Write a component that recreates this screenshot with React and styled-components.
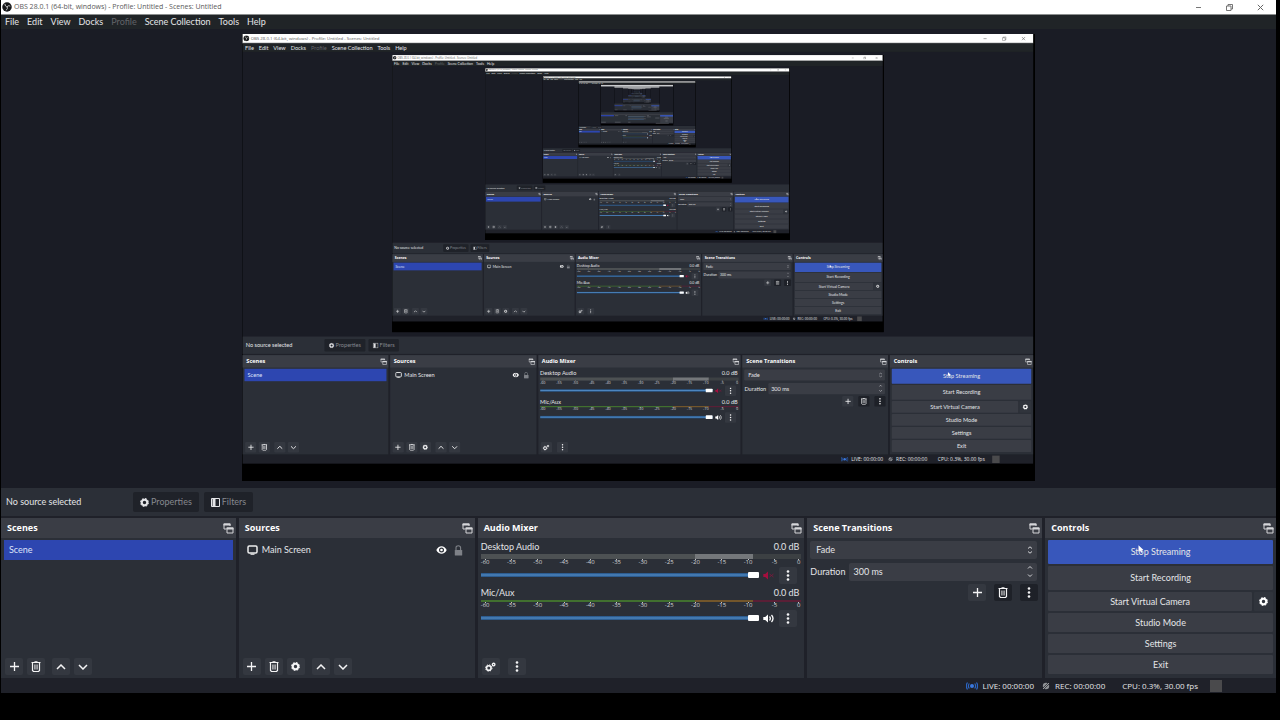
import React, { useId } from 'react';
import styled, { createGlobalStyle, css } from 'styled-components';

const SCALE = 0.62;
const DEPTH = 5;
const THUMBS = 5;
const MARKS = [-60, -55, -50, -45, -40, -35, -30, -25, -20, -15, -10, -5, 0];

const GlobalStyle = createGlobalStyle`
    * {
        box-sizing: border-box;
    }

    body {
        margin: 0;
        background: #000;
        overflow: hidden;
    }

    button, input, select {
        font: inherit;
        color: inherit;
        border: 0;
        margin: 0;
        padding: 0;
        background: none;
    }
`

const Screen = styled.div`
    width: 100vw;
    height: 100vh;
    padding: 0 4px 27px 1px;
    background: #000;
    color: #e4e5e8;
    font-family: Lato, 'Open Sans', sans-serif;
    font-size: 9px;
    line-height: 12px;
    white-space: nowrap;
`

const Window = styled.div`
    height: 100%;
    display: flex;
    flex-direction: column;
    background: #1f2129;
`

const TitleBar = styled.header`
    height: 15px;
    flex: none;
    display: flex;
    align-items: center;
    gap: 2px;
    padding: 0 1px;
    background: #fff;
    color: #5a5a5a;
    font-family: 'Open Sans', 'Noto Sans', sans-serif;
    font-size: 7px;
    border-bottom: 1px solid #8b8e8e;
`

const Title = styled.span`
    flex: 1;
`

const WindowButton = styled.button`
    width: 29px;
    height: 14px;
    display: grid;
    place-items: center;
`

const MenuBar = styled.nav`
    flex: none;
    height: 14px;
    display: flex;
    align-items: center;
    gap: 8px;
    padding: 0 4px;
    background: #202427;
`

const MenuItem = styled.button`
    line-height: 12px;
    color: ${props => (props.disabled ? '#606367' : '#e4e5e8')};
`

const Preview = styled.main`
    flex: 1;
    min-height: 0;
    display: flex;
    align-items: center;
    justify-content: center;
    padding-bottom: 2px;
    background: #1a1c25;
`

const Capture = styled.div`
    width: calc(100vw * ${SCALE});
    height: calc(100vh * ${SCALE});
    overflow: hidden;
    background: #000;
`

const Mirror = styled.div`
    width: 100vw;
    height: 100vh;
    transform: scale(${SCALE});
    transform-origin: 0 0;
`

const Thumbnail = styled.svg`
    display: block;
    width: 100%;
    height: 100%;
`

const ContextBar = styled.div`
    flex: none;
    height: 28px;
    display: flex;
    align-items: center;
    gap: 5px;
    padding-left: 5px;
    background: #2b2f37;
`

const ContextLabel = styled.span`
    width: 122px;
`

const ContextButton = styled.button`
    height: 20px;
    display: flex;
    align-items: center;
    gap: 2px;
    padding: 0 7px;
    border-radius: 2px;
    background: #1f2229;
    color: #85888e;

    svg {
        color: #e4e5e8;
    }
`

const Docks = styled.div`
    flex: none;
    height: 160px;
    margin-top: 2px;
    display: grid;
    grid-template-columns: 235fr 236fr 327fr 235fr 231fr;
    gap: 3px;
`

const DockPanel = styled.section`
    min-width: 0;
    display: flex;
    flex-direction: column;
    background: #2b2f37;
`

const DockHeader = styled.div`
    flex: none;
    height: 20px;
    display: flex;
    align-items: center;
    justify-content: space-between;
    padding: 0 2px 0 6px;
    background: #3a3d45;
`

const DockTitle = styled.h2`
    margin: 0;
    font-family: 'Open Sans', 'Noto Sans', sans-serif;
    font-size: 9px;
    line-height: 12px;
    font-weight: 700;
    color: #fff;
`

const DockBody = styled.div`
    flex: 1;
    display: flex;
    flex-direction: column;
    padding: 2px 3px 3px;
`

const List = styled.ul`
    flex: 1;
    margin: 0;
    padding: 0;
    list-style: none;
`

const SceneRow = styled.button`
    width: 100%;
    height: 20px;
    padding-left: 5px;
    text-align: left;
    background: #2d46b0;
    color: #dfe4fa;
`

const SourceRow = styled.li`
    height: 20px;
    display: flex;
    align-items: center;
    gap: 4px;
    padding: 0 7px 0 5px;
`

const SourceName = styled.span`
    flex: 1;
`

const ToggleButton = styled.button`
    width: 13px;
    height: 16px;
    display: grid;
    place-items: center;
    color: ${props => (props.$dim ? '#7e8187' : '#fff')};
`

const Toolbar = styled.div`
    display: flex;
    gap: ${props => (props.$wide ? '8px' : '4px')};
    justify-content: ${props => (props.$end ? 'flex-end' : 'flex-start')};
    padding: 0 1px;
`

const ToolButton = styled.button`
    width: 18px;
    height: 17px;
    flex: none;
    display: grid;
    place-items: center;
    border-radius: 2px;
    background: ${props => (props.$dark ? '#1e2128' : '#343840')};
    color: #f4f4f5;
    ${props => props.$gap && css`
        margin-left: 3px;
    `}
`

const Channels = styled.div`
    flex: 1;
    display: flex;
    flex-direction: column;
    gap: 3px;
`

const Channel = styled.div`
    display: flex;
    flex-direction: column;
`

const ChannelHead = styled.div`
    height: 14px;
    line-height: 14px;
    display: flex;
    justify-content: space-between;
    padding-right: 2px;
`

const Meter = styled.div`
    height: ${props => (props.$muted ? '5px' : '2px')};
    display: grid;
    grid-template-columns: 214fr 58fr 48fr;
`

const MeterZone = styled.span`
    background: ${props => props.$color};
`

const Scale = styled.div`
    display: flex;
    justify-content: space-between;
    height: 8px;
    color: #d2d4d8;
    font-family: 'Open Sans', 'Noto Sans', sans-serif;
    font-size: 6px;
    line-height: 5px;
`

const Mark = styled.span`
    width: 9px;
    display: flex;
    flex-direction: column;
    align-items: center;

    &::before {
        content: '';
        width: 1px;
        height: 1px;
        flex: none;
        background: #c2c4c8;
    }

    &:last-child {
        width: 5px;
    }
`

const VolumeRow = styled.div`
    height: 16px;
    display: flex;
    align-items: center;
    gap: 3px;
    padding-right: 4px;
`

const Volume = styled.input`
    appearance: none;
    flex: 1;
    min-width: 0;
    height: 6px;
    background: linear-gradient(#234f80, #4d86bf 50%, #234f80) center / 100% 4px no-repeat;

    &::-webkit-slider-thumb {
        appearance: none;
        width: 11px;
        height: 6px;
        border-radius: 1px;
        background: #fff;
    }
`

const MuteButton = styled.button`
    width: 12px;
    height: 12px;
    margin-right: 2px;
    display: grid;
    place-items: center;
    color: ${props => (props.$muted ? '#a30f3e' : '#fff')};
`

const Field = styled.div`
    height: 19px;
    display: flex;
    align-items: center;
    gap: 4px;
    margin-bottom: 3px;
`

const InputBox = styled.div`
    flex: 1;
    min-width: 0;
    height: 18px;
    display: flex;
    align-items: center;
    padding: 0 4px;
    margin-right: 2px;
    border-radius: 2px;
    background: #3a3d45;
`

const Select = styled.select`
    appearance: none;
    flex: 1;
    padding-left: 2px;
`

const TextInput = styled.input`
    flex: 1;
    min-width: 0;
`

const ControlButtons = styled.div`
    display: flex;
    flex-direction: column;
    gap: 2px;
`

const ControlRow = styled.div`
    display: flex;
    gap: 2px;
`

const ControlButton = styled.button`
    position: relative;
    flex: 1;
    height: ${props => (props.$tall ? '24px' : '19px')};
    border-radius: 1px;
    background: ${props => (props.$active ? '#3857bb' : '#3a3d45')};
`

const GearButton = styled(ControlButton)`
    flex: 0 0 19px;
    display: grid;
    place-items: center;
    background: #30343c;
    color: #fff;
`

const Pointer = styled.svg`
    position: absolute;
    left: calc(50% - 23px);
    top: 5px;
`

const StatusBar = styled.footer`
    flex: none;
    height: 15px;
    display: flex;
    align-items: center;
    justify-content: flex-end;
    gap: 5px;
    padding-right: 54px;
    font-family: 'Open Sans', 'Noto Sans', sans-serif;
    font-size: 8px;
`

const StatusText = styled.span`
    margin-right: ${props => props.$space || 0}px;
`

const StatusBox = styled.span`
    width: 12px;
    height: 12px;
    background: #4a4a4c;
`

const ObsLogo = () => (
    <svg width="10" height="10" viewBox="0 0 20 20">
        <circle cx="10" cy="10" r="9.5" fill="#17181a" />
        <g fill="none" stroke="#d6d6d6" strokeWidth="1.8" strokeLinecap="round">
            <path d="M6 4.5c0 3 1.600 4.800 4.300 5.200" />
            <path d="M15.800 8c-2.600-1.300-4.500-.6-5.500 1.700" />
            <path d="M8.500 16c2.600-1.400 3-3.500 1.800-6.300" />
        </g>
    </svg>
)

const MinimizeIcon = () => (
    <svg width="7" height="7" viewBox="0 0 7 7" stroke="#777" fill="none"><path d="M1 3.500h5" /></svg>
)

const RestoreIcon = () => (
    <svg width="7" height="7" viewBox="0 0 7 7" stroke="#666" fill="none" strokeWidth=".9">
        <path d="M.5 2h4.500v4.500H.5zM2 2V.5h4.500V5H5" />
    </svg>
)

const CloseIcon = () => (
    <svg width="7" height="7" viewBox="0 0 7 7" stroke="#666" fill="none"><path d="M.8.8l5.400 5.400M6.200.8L.8 6.200" /></svg>
)

const FloatIcon = () => (
    <svg width="11" height="11" viewBox="0 0 11 11" fill="none" stroke="#d5d6d9">
        <path d="M3 6H1V1h6v2" />
        <path d="M.5 1.500h7M3.500 5.500h7" strokeWidth="1.800" />
        <path d="M4 5h6v5H4z" />
    </svg>
)

const PlusIcon = () => (
    <svg width="9" height="9" viewBox="0 0 9 9" stroke="currentColor" strokeWidth="1.300"><path d="M4.500 0v9M0 4.500h9" /></svg>
)

const TrashIcon = () => (
    <svg width="10" height="11" viewBox="0 0 10 11" fill="none" stroke="currentColor">
        <path d="M.5 1.500h9M3.500.8h3M1.500 1.500v8l1 1h5l1-1v-8" strokeWidth="1.200" />
        <path d="M3.700 3.500v5M5 3.500v5M6.300 3.500v5" strokeWidth=".7" />
    </svg>
)

const GearIcon = () => (
    <svg width="9" height="9" viewBox="0 0 10 10" fill="none" stroke="currentColor">
        <circle cx="5" cy="5" r="3" strokeWidth="2.200" />
        <circle cx="5" cy="5" r="4.300" strokeWidth="1.200" strokeDasharray="1.900 1.477" />
    </svg>
)

const GearsIcon = () => (
    <svg width="11" height="10" viewBox="0 0 11 10" fill="none" stroke="currentColor">
        <circle cx="3.800" cy="6" r="2.300" strokeWidth="1.600" />
        <circle cx="3.800" cy="6" r="3.200" strokeDasharray="1.300 1.210" />
        <circle cx="8.600" cy="2.600" r="1.300" strokeWidth="1.400" />
    </svg>
)

const UpIcon = () => (
    <svg width="10" height="6" viewBox="0 0 10 6" fill="none" stroke="currentColor" strokeWidth="1.500"><path d="M1 5l4-4 4 4" /></svg>
)

const DownIcon = () => (
    <svg width="10" height="6" viewBox="0 0 10 6" fill="none" stroke="currentColor" strokeWidth="1.500"><path d="M1 1l4 4 4-4" /></svg>
)

const DotsIcon = () => (
    <svg width="4" height="11" viewBox="0 0 4 11" fill="currentColor">
        <circle cx="2" cy="1.500" r="1.300" />
        <circle cx="2" cy="5.500" r="1.300" />
        <circle cx="2" cy="9.500" r="1.300" />
    </svg>
)

const FiltersIcon = () => (
    <svg width="9" height="9" viewBox="0 0 9 9" fill="none" stroke="currentColor">
        <path d="M.5.5h8v8h-8z" />
        <path d="M1.500 1h3v7h-3z" fill="currentColor" stroke="none" />
    </svg>
)

const ScreenIcon = () => (
    <svg width="11" height="10" viewBox="0 0 11 10" fill="none" stroke="#eceded" strokeWidth="1.500">
        <rect x="1" y="1" width="9" height="7" rx="1.200" />
        <path d="M3.500 9.200h4" strokeWidth="1.200" />
    </svg>
)

const EyeIcon = () => (
    <svg width="11" height="8" viewBox="0 0 11 8">
        <path d="M.3 4C1.500 1.500 3.300.2 5.500.2S9.500 1.500 10.700 4C9.500 6.500 7.700 7.800 5.500 7.800S1.500 6.500.3 4z" fill="currentColor" />
        <circle cx="5.500" cy="4" r="2.500" fill="#2b2f37" />
        <circle cx="5.500" cy="4" r="1.300" fill="currentColor" />
    </svg>
)

const LockIcon = () => (
    <svg width="9" height="11" viewBox="0 0 9 11">
        <path d="M2 5V2.800C2 1.400 3 .7 4.300.7s2.300.8 2.300 2.100V5" fill="none" stroke="currentColor" strokeWidth="1.100" />
        <rect x=".8" y="5" width="7.400" height="5.500" rx=".6" fill="currentColor" />
    </svg>
)

const SpeakerIcon = () => (
    <svg width="11" height="9" viewBox="0 0 11 9" fill="none" stroke="currentColor">
        <path d="M.3 3h1.900L5 .5v8L2.200 6H.3z" fill="currentColor" stroke="none" />
        <path d="M6.500 2.500c1 1.200 1 2.800 0 4M8.500 1c1.900 2.200 1.900 4.800 0 7" strokeWidth="1.300" />
    </svg>
)

const MutedIcon = () => (
    <svg width="11" height="9" viewBox="0 0 11 9" fill="currentColor">
        <path d="M.3 3h1.900L5 .5v8L2.200 6H.3z" />
        <path d="M6.500 3l4 3M10.500 3l-4 3" stroke="currentColor" opacity=".6" />
    </svg>
)

const SpinIcon = ({ tall }) => (
    <svg width="6" height={tall ? 13 : 8} viewBox={tall ? '0 0 6 13' : '0 0 6 8'} fill="none" stroke="#d5d6d9">
        <path d={tall ? 'M1 3.500l2-2 2 2M1 9.500l2 2 2-2' : 'M1 2.500l2-1.700 2 1.700M1 5.500l2 1.700 2-1.700'} />
    </svg>
)

const LiveIcon = () => (
    <svg width="12" height="8" viewBox="0 0 12 8" fill="none" stroke="#2c66c4" strokeWidth="1.200">
        <circle cx="6" cy="4" r="2" fill="#3a78de" stroke="none" />
        <path d="M3.300 1.500c-1.100 1.500-1.100 3.500 0 5M1.500.5c-1.300 2-1.300 5 0 7M8.700 1.500c1.100 1.500 1.100 3.500 0 5M10.500.5c1.300 2 1.300 5 0 7" />
    </svg>
)

const RecIcon = () => (
    <svg width="8" height="8" viewBox="0 0 8 8">
        <circle cx="4" cy="4" r="3.200" fill="#8e9094" />
        <path d="M.8 7.200l6.400-6.400" stroke="#1f2129" strokeWidth="1.800" />
        <path d="M1 7l6-6" stroke="#b9babd" strokeWidth=".8" />
    </svg>
)

const Dock = ({ title, children }) => (
    <DockPanel>
        <DockHeader>
            <DockTitle>{title}</DockTitle>
            <FloatIcon />
        </DockHeader>
        <DockBody>{children}</DockBody>
    </DockPanel>
)

const MixerChannel = ({ name, muted }) => {
    const id = useId();
    const colors = muted ? ['#4d5153', '#74777a', '#3c4043'] : ['#41702f', '#73562b', '#5a1f36'];
    return (
        <Channel>
            <ChannelHead>
                <label htmlFor={id}>{name}</label>
                <span>0.0 dB</span>
            </ChannelHead>
            <Meter $muted={muted}>
                {colors.map(color => <MeterZone key={color} $color={color} />)}
            </Meter>
            <Scale>
                {MARKS.map(mark => <Mark key={mark}>{mark}</Mark>)}
            </Scale>
            <VolumeRow>
                <Volume id={id} type="range" min="0" max="100" defaultValue="100" />
                <MuteButton $muted={muted} aria-label={`Mute ${name}`}>
                    {muted ? <MutedIcon /> : <SpeakerIcon />}
                </MuteButton>
                <ToolButton aria-label={`${name} options`}><DotsIcon /></ToolButton>
            </VolumeRow>
        </Channel>
    )
}

const Transitions = () => {
    const id = useId();
    return (
        <Dock title="Scene Transitions">
            <Field>
                <InputBox>
                    <Select aria-label="Transition" defaultValue="Fade">
                        <option>Fade</option>
                        <option>Cut</option>
                    </Select>
                    <SpinIcon />
                </InputBox>
            </Field>
            <Field>
                <label htmlFor={id}>Duration</label>
                <InputBox>
                    <TextInput id={id} defaultValue="300 ms" />
                    <SpinIcon tall />
                </InputBox>
            </Field>
            <Toolbar $end $wide>
                <ToolButton aria-label="Add transition"><PlusIcon /></ToolButton>
                <ToolButton $dark aria-label="Remove transition"><TrashIcon /></ToolButton>
                <ToolButton $dark aria-label="Transition options"><DotsIcon /></ToolButton>
            </Toolbar>
        </Dock>
    )
}

const Controls = () => (
    <Dock title="Controls">
        <ControlButtons>
            <ControlRow>
                <ControlButton $tall $active>
                    Stop Streaming
                    <Pointer width="6" height="8" viewBox="0 0 6 8">
                        <path d="M.5.3v6.400l1.600-1.300 1 2.300 1.200-.5-1-2.200h2.200z" fill="#fff" />
                    </Pointer>
                </ControlButton>
            </ControlRow>
            <ControlRow><ControlButton $tall>Start Recording</ControlButton></ControlRow>
            <ControlRow>
                <ControlButton>Start Virtual Camera</ControlButton>
                <GearButton aria-label="Virtual camera settings"><GearIcon /></GearButton>
            </ControlRow>
            <ControlRow><ControlButton>Studio Mode</ControlButton></ControlRow>
            <ControlRow><ControlButton>Settings</ControlButton></ControlRow>
            <ControlRow><ControlButton>Exit</ControlButton></ControlRow>
        </ControlButtons>
    </Dock>
)

// too small to read from here on, so only the blocks of the window are drawn
const ThumbWindow = ({ left }) => (
    <g>
        <rect width="1280" height="720" fill="#000" />
        <rect width="1277" height="693" fill="#1b1d26" />
        <rect y="488" width="1277" height="190" fill="#2b2f37" />
        <rect y="518" width="1277" height="20" fill="#3a3d45" />
        <rect x="3" y="540" width="230" height="22" fill="#2d46b0" />
        <rect x="1047" y="540" width="227" height="136" fill="#3a3d45" />
        <rect x="1047" y="540" width="227" height="26" fill="#3857bb" />
        <g stroke="#9a9ca2" strokeWidth="8">
            <path d="M250 550h60M435 550h28M484 562h310M484 606h310M812 550h40M812 572h70" opacity=".7" />
            <path d="M10 666h80M250 666h100M484 666h40M960 592h75M1110 602h90M1130 578h60M1140 644h40M970 686h230" opacity=".7" />
        </g>
        <path d="M480 575h280M480 619h280" stroke="#3f74ab" strokeWidth="6" />
        {left > 0 && (
            <g transform={`translate(${1277 / 2 - 640 * SCALE} ${257.5 - 360 * SCALE}) scale(${SCALE})`}>
                <ThumbWindow left={left - 1} />
            </g>
        )}
        <rect width="1277" height="36" fill="#c9cacd" />
    </g>
)

// the preview captures the whole desktop, so it shows this same window again
const Desktop = ({ depth }) => (
    <Screen>
        <Window>
            <TitleBar>
                <ObsLogo />
                <Title>OBS 28.0.1 (64-bit, windows) - Profile: Untitled - Scenes: Untitled</Title>
                <WindowButton aria-label="Minimize"><MinimizeIcon /></WindowButton>
                <WindowButton aria-label="Restore"><RestoreIcon /></WindowButton>
                <WindowButton aria-label="Close"><CloseIcon /></WindowButton>
            </TitleBar>
            <MenuBar>
                <MenuItem>File</MenuItem>
                <MenuItem>Edit</MenuItem>
                <MenuItem>View</MenuItem>
                <MenuItem>Docks</MenuItem>
                <MenuItem disabled>Profile</MenuItem>
                <MenuItem>Scene Collection</MenuItem>
                <MenuItem>Tools</MenuItem>
                <MenuItem>Help</MenuItem>
            </MenuBar>
            <Preview>
                <Capture aria-hidden="true" inert>
                    {depth > 0 ? (
                        <Mirror><Desktop depth={depth - 1} /></Mirror>
                    ) : (
                        <Thumbnail viewBox="0 0 1280 720" preserveAspectRatio="none">
                            <ThumbWindow left={THUMBS} />
                        </Thumbnail>
                    )}
                </Capture>
            </Preview>
            <ContextBar>
                <ContextLabel>No source selected</ContextLabel>
                <ContextButton><GearIcon />Properties</ContextButton>
                <ContextButton><FiltersIcon />Filters</ContextButton>
            </ContextBar>
            <Docks>
                <Dock title="Scenes">
                    <List>
                        <li><SceneRow>Scene</SceneRow></li>
                    </List>
                    <Toolbar>
                        <ToolButton aria-label="Add scene"><PlusIcon /></ToolButton>
                        <ToolButton aria-label="Remove scene"><TrashIcon /></ToolButton>
                        <ToolButton $gap aria-label="Move scene up"><UpIcon /></ToolButton>
                        <ToolButton aria-label="Move scene down"><DownIcon /></ToolButton>
                    </Toolbar>
                </Dock>
                <Dock title="Sources">
                    <List>
                        <SourceRow>
                            <ScreenIcon />
                            <SourceName>Main Screen</SourceName>
                            <ToggleButton aria-label="Visible"><EyeIcon /></ToggleButton>
                            <ToggleButton $dim aria-label="Locked"><LockIcon /></ToggleButton>
                        </SourceRow>
                    </List>
                    <Toolbar>
                        <ToolButton aria-label="Add source"><PlusIcon /></ToolButton>
                        <ToolButton aria-label="Remove source"><TrashIcon /></ToolButton>
                        <ToolButton aria-label="Source properties"><GearIcon /></ToolButton>
                        <ToolButton $gap aria-label="Move source up"><UpIcon /></ToolButton>
                        <ToolButton aria-label="Move source down"><DownIcon /></ToolButton>
                    </Toolbar>
                </Dock>
                <Dock title="Audio Mixer">
                    <Channels>
                        <MixerChannel name="Desktop Audio" muted />
                        <MixerChannel name="Mic/Aux" />
                    </Channels>
                    <Toolbar $wide>
                        <ToolButton aria-label="Advanced audio properties"><GearsIcon /></ToolButton>
                        <ToolButton aria-label="Mixer options"><DotsIcon /></ToolButton>
                    </Toolbar>
                </Dock>
                <Transitions />
                <Controls />
            </Docks>
            <StatusBar>
                <LiveIcon />
                <StatusText $space={3}>LIVE: 00:00:00</StatusText>
                <RecIcon />
                <StatusText $space={12}>REC: 00:00:00</StatusText>
                <StatusText $space={7}>CPU: 0.3%, 30.00 fps</StatusText>
                <StatusBox />
            </StatusBar>
        </Window>
    </Screen>
)

const App = () => (
    <>
        <GlobalStyle />
        <Desktop depth={DEPTH} />
    </>
)

export default App;
